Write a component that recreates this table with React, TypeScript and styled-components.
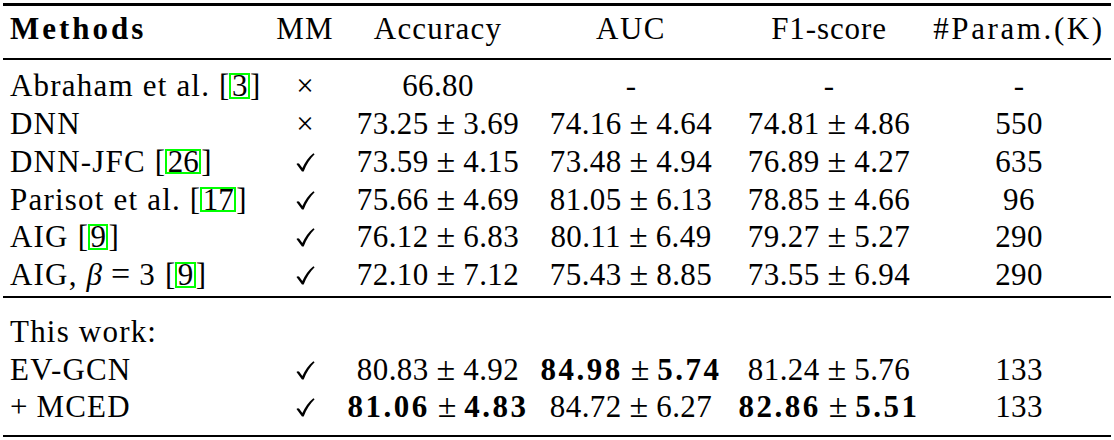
import React from "react";
import styled, { createGlobalStyle } from "styled-components";

const Global = createGlobalStyle`
  html, body { margin: 0; padding: 0; background: #ffffff; }
  body { font-family: "Liberation Serif", "Times New Roman", serif; color: #000000; }
`;

const Table = styled.div`
  margin: 3px 0 0 3px;
  width: 1108px;
  font-family: "Liberation Serif", "Times New Roman", serif;
  font-size: 31px;
  color: #000;
`;

const Rule = styled.div<{ $heavy?: boolean }>`
  height: ${(p) => (p.$heavy ? 2.5 : 1.5)}px;
  background: #000;
`;

const Section = styled.div<{ $top: number; $bottom: number }>`
  padding: ${(p) => p.$top}px 0 ${(p) => p.$bottom}px 7px;
`;

const Row = styled.div`
  display: grid;
  grid-template-columns: 270px 50px 216px 170px 226px 154px;
  height: 37.8px;
  line-height: 37.8px;
  white-space: nowrap;
`;

const Cell = styled.div<{ $left?: boolean }>`
  display: flex;
  justify-content: ${(p) => (p.$left ? "flex-start" : "center")};
  min-width: 0;
`;

const Text = styled.span<{ $bold?: boolean; $spacing?: number }>`
  font-weight: ${(p) => (p.$bold ? 700 : 400)};
  letter-spacing: ${(p) => p.$spacing ?? 1.2}px;
`;

const Num = styled.span<{ $bold?: boolean }>`
  font-weight: ${(p) => (p.$bold ? 700 : 400)};
  letter-spacing: ${(p) => (p.$bold ? 2.5 : 0.4)}px;
`;

const Op = styled.span<{ $gap: number; $size: number }>`
  display: inline-block;
  font-weight: 400;
  font-size: ${(p) => p.$size}px;
  line-height: 20px;
  letter-spacing: 0;
  margin: 0 ${(p) => p.$gap}px;
`;

const Greek = styled.span`
  font-style: italic;
  letter-spacing: 0;
`;

const CiteWrap = styled.span`
  letter-spacing: 0;
`;

const CiteBox = styled.span`
  display: inline-block;
  border: 2.6px solid #00ff00;
  line-height: 21.3px;
  padding: 0 0.5px;
  letter-spacing: 0;
`;

const Times = styled.span`
  letter-spacing: 0;
`;

const CheckSvg = styled.svg`
  width: 19px;
  height: 19px;
  vertical-align: baseline;
  display: inline-block;
`;

const Check = () => (
  <CheckSvg viewBox="0 0 20 20" aria-label="✓">
    <path
      d="M0.5 11.5 C1.3 10.6 2.6 10.3 3.4 11.3 L6.7 15.8 C9.6 9.6 13.4 4.4 18.3 0.3 L19.6 1.4 C15 5.8 11 12 8.1 19.4 L6.3 19.6 Z"
      fill="#000"
    />
  </CheckSvg>
);

const Cite = ({ n }: { n: string }) => (
  <CiteWrap>
    [<CiteBox>{n}</CiteBox>]
  </CiteWrap>
);

type Val = string | { m: string; s: string; b?: boolean };

const Value = ({ v }: { v: Val }) => {
  if (typeof v === "string") return <Num>{v}</Num>;
  return (
    <span>
      <Num $bold={v.b}>{v.m}</Num>
      <Op $gap={8} $size={34}>±</Op>
      <Num $bold={v.b}>{v.s}</Num>
    </span>
  );
};

type DataRow = {
  name: React.ReactNode;
  mm: "x" | "v";
  acc: Val;
  auc: Val;
  f1: Val;
  param: string;
};

const upper: DataRow[] = [
  {
    name: (
      <>
        <Text>Abraham et al. </Text>
        <Cite n="3" />
      </>
    ),
    mm: "x",
    acc: "66.80",
    auc: "-",
    f1: "-",
    param: "-",
  },
  {
    name: <Text>DNN</Text>,
    mm: "x",
    acc: { m: "73.25", s: "3.69" },
    auc: { m: "74.16", s: "4.64" },
    f1: { m: "74.81", s: "4.86" },
    param: "550",
  },
  {
    name: (
      <>
        <Text>DNN-JFC </Text>
        <Cite n="26" />
      </>
    ),
    mm: "v",
    acc: { m: "73.59", s: "4.15" },
    auc: { m: "73.48", s: "4.94" },
    f1: { m: "76.89", s: "4.27" },
    param: "635",
  },
  {
    name: (
      <>
        <Text>Parisot et al. </Text>
        <Cite n="17" />
      </>
    ),
    mm: "v",
    acc: { m: "75.66", s: "4.69" },
    auc: { m: "81.05", s: "6.13" },
    f1: { m: "78.85", s: "4.66" },
    param: "96",
  },
  {
    name: (
      <>
        <Text>AIG </Text>
        <Cite n="9" />
      </>
    ),
    mm: "v",
    acc: { m: "76.12", s: "6.83" },
    auc: { m: "80.11", s: "6.49" },
    f1: { m: "79.27", s: "5.27" },
    param: "290",
  },
  {
    name: (
      <>
        <Text>AIG, </Text>
        <Greek>β</Greek>
        <Op $gap={9} $size={34}>=</Op>
        <Text>3 </Text>
        <Cite n="9" />
      </>
    ),
    mm: "v",
    acc: { m: "72.10", s: "7.12" },
    auc: { m: "75.43", s: "8.85" },
    f1: { m: "73.55", s: "6.94" },
    param: "290",
  },
];

const lower: DataRow[] = [
  {
    name: <Text>EV-GCN</Text>,
    mm: "v",
    acc: { m: "80.83", s: "4.92" },
    auc: { m: "84.98", s: "5.74", b: true },
    f1: { m: "81.24", s: "5.76" },
    param: "133",
  },
  {
    name: (
      <>
        <Text $spacing={0}>+</Text>
        <Text> MCED</Text>
      </>
    ),
    mm: "v",
    acc: { m: "81.06", s: "4.83", b: true },
    auc: { m: "84.72", s: "6.27" },
    f1: { m: "82.86", s: "5.51", b: true },
    param: "133",
  },
];

const Line = ({ r }: { r: DataRow }) => (
  <Row>
    <Cell $left>
      <span>{r.name}</span>
    </Cell>
    <Cell>
      <span>{r.mm === "x" ? <Times>×</Times> : <Check />}</span>
    </Cell>
    <Cell>
      <Value v={r.acc} />
    </Cell>
    <Cell>
      <Value v={r.auc} />
    </Cell>
    <Cell>
      <Value v={r.f1} />
    </Cell>
    <Cell>
      <Num>{r.param}</Num>
    </Cell>
  </Row>
);

export default function App() {
  return (
    <>
      <Global />
      <Table>
        <Rule $heavy />
        <Section $top={4.6} $bottom={10.6}>
          <Row>
            <Cell $left>
              <Text $bold $spacing={3}>Methods</Text>
            </Cell>
            <Cell>
              <Text>MM</Text>
            </Cell>
            <Cell>
              <Text>Accuracy</Text>
            </Cell>
            <Cell>
              <Text $spacing={1.5}>AUC</Text>
            </Cell>
            <Cell>
              <Text $spacing={0.9}>F1-score</Text>
            </Cell>
            <Cell>
              <Text $spacing={2.6}>#Param.(K)</Text>
            </Cell>
          </Row>
        </Section>
        <Rule />
        <Section $top={7.3} $bottom={2.4}>
          {upper.map((r, i) => (
            <Line key={i} r={r} />
          ))}
        </Section>
        <Rule />
        <Section $top={14.9} $bottom={8.7}>
          <Row>
            <Cell $left>
              <Text>This work:</Text>
            </Cell>
          </Row>
          {lower.map((r, i) => (
            <Line key={i} r={r} />
          ))}
        </Section>
        <Rule $heavy />
      </Table>
    </>
  );
}
